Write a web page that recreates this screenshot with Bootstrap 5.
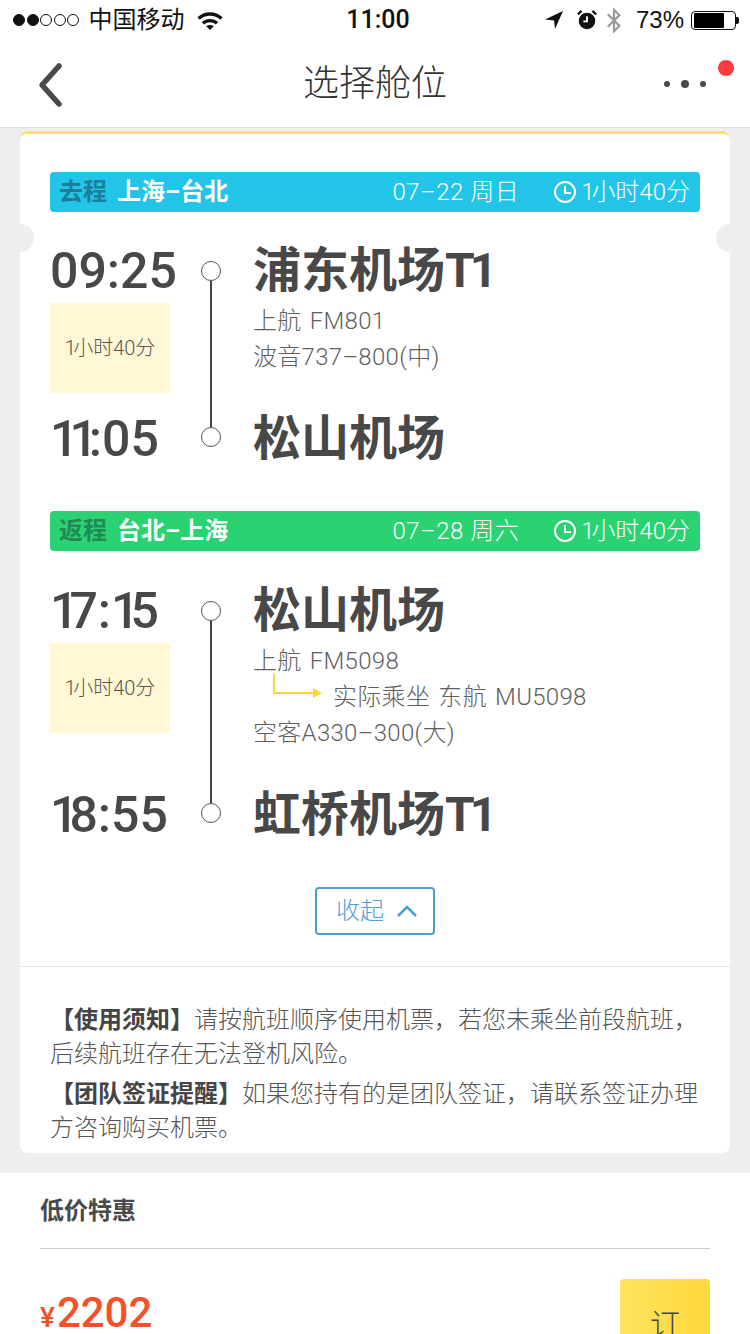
<!DOCTYPE html>
<html lang="zh-CN">
<head>
    <meta charset="UTF-8">
    <meta name="viewport" content="width=device-width, initial-scale=1.0">
    <title>选择舱位</title>
    <link href="https://cdn.jsdelivr.net/npm/bootstrap@5.3.0/dist/css/bootstrap.min.css" rel="stylesheet">
    <style>
        html, body {
            height: 1334px;
            overflow: hidden;
        }
        body {
            background-color: #eee;
            font-family: Roboto, "Noto Sans CJK SC", sans-serif;
            color: #4a4a4a;
        }
        /* digits in the picture are proportional, so the 1 sits tighter */
        .one-big {
            letter-spacing: -.18em;
        }
        .one-thin {
            letter-spacing: -.13em;
        }
        .status-bar {
            height: 40px;
            padding: 0 11px 0 13px;
            font-size: 24px;
            color: #111;
        }
        .signal-dot {
            width: 12px;
            height: 12px;
            margin-right: 1.5px;
            border-radius: 50%;
            border: 1px solid #111;
        }
        .signal-dot.on {
            background-color: #111;
        }
        .carrier {
            margin-left: 8px;
            margin-right: 12px;
            font-family: "Liberation Sans", "Noto Sans CJK SC", sans-serif;
        }
        .status-time {
            left: 0;
            right: 0;
            top: 4px;
            font-size: 25px;
            font-weight: 500;
            line-height: 32px;
            text-align: center;
            padding-left: 6px;
        }
        .alarm-icon {
            margin-left: 12px;
        }
        .battery-pct {
            margin-left: 14px;
            font-family: "Liberation Sans", sans-serif;
        }
        .battery-shell {
            width: 45px;
            height: 19px;
            margin-left: 7px;
            border: 1px solid #111;
            border-radius: 4px;
            padding: 1px 2px;
        }
        .battery-fill {
            width: 30px;
            height: 100%;
            background-color: #000;
            border-radius: 1px;
        }
        .battery-tip {
            width: 3px;
            height: 7px;
            background-color: #111;
            border-radius: 0 2px 2px 0;
        }
        .top-nav {
            height: 88px;
            border-bottom: 1px solid #ddd;
        }
        .nav-title {
            font-size: 36px;
            font-weight: 300;
            color: #333;
        }
        .nav-back {
            left: 36px;
            top: 22px;
        }
        .nav-more {
            left: 663px;
            top: 40px;
        }
        .nav-badge {
            left: 718px;
            top: 20px;
            width: 16px;
            height: 16px;
            border-radius: 50%;
            background-color: #ff3b41;
        }
        .ticket {
            margin: 3px 20px 20px;
            padding: 38px 30px 8px;
            border-top: 3px solid #fbe070;
            border-radius: 8px;
            overflow: hidden;
        }
        .notch {
            width: 28px;
            height: 28px;
            top: 90px;
            border-radius: 50%;
            background-color: #eee;
        }
        .notch.l {
            left: -14px;
        }
        .notch.r {
            right: -14px;
        }
        .leg-bar {
            height: 40px;
            padding: 0 10px 0 9px;
            border-radius: 4px;
            color: #fff;
            font-size: 24px;
        }
        .leg-bar.go {
            background-color: #22c5e8;
        }
        .leg-bar.back {
            background-color: #2bd272;
            margin-top: 44px;
        }
        .leg-tag {
            font-weight: 700;
            margin-right: 10px;
        }
        .go .leg-tag {
            color: #1b7f98;
        }
        .back .leg-tag {
            color: #1f8a55;
        }
        .leg-route {
            font-weight: 700;
        }
        .leg-date {
            font-weight: 300;
            margin-right: 34px;
            letter-spacing: .5px;
        }
        .leg-dur {
            font-weight: 300;
        }
        .leg-dur svg {
            margin-right: 4px;
        }
        .leg-body {
            margin-top: 29px;
        }
        .back + .leg-body {
            margin-top: 30px;
        }
        .time-col {
            width: 149px;
        }
        .dep-time {
            font-size: 50px;
            line-height: 60px;
            font-weight: 500;
            color: #484848;
        }
        .dep-time.arr {
            margin-bottom: -2px;
        }
        .dur-box {
            width: 120px;
            height: 90px;
            margin-top: 2px;
            background-color: #fff7d6;
            font-size: 20px;
            font-weight: 300;
            color: #555;
        }
        .line-col {
            width: 24px;
            padding: 20px 0;
        }
        .line-dot {
            width: 20px;
            height: 20px;
            flex: none;
            border-radius: 50%;
            border: 1.5px solid #555;
            background-color: #fff;
        }
        .line-bar {
            width: 2px;
            background-color: #444;
        }
        .info-col {
            margin-left: 30px;
        }
        .port-name {
            font-size: 48px;
            line-height: 60px;
            font-weight: 700;
            color: #484848;
        }
        .port-name.arr {
            margin-bottom: -2px;
        }
        .tee-kern {
            letter-spacing: -5px;
        }
        .port-info {
            margin-top: 2px;
            margin-bottom: 34px;
            font-size: 24px;
            line-height: 36px;
            font-weight: 300;
            color: #5f5f5f;
            word-spacing: 2px;
            letter-spacing: .3px;
        }
        .share-arrow {
            margin-left: 20px;
            margin-right: 10px;
            overflow: visible;
        }
        .fold-btn {
            width: 120px;
            height: 48px;
            margin-top: 44px;
            padding-left: 4px;
            border: 2px solid #4a9fd4;
            border-radius: 4px;
            color: #4a9fd4;
            font-size: 24px;
            font-weight: 300;
        }
        .fold-btn svg {
            margin-left: 12px;
        }
        .ticket-rule {
            margin: 31px -30px 36px;
            border-top: 1px solid #e4e4e4;
        }
        .notice {
            margin-bottom: 6px;
            font-size: 24px;
            line-height: 34px;
            font-weight: 300;
            color: #555;
        }
        .notice:last-child {
            margin-bottom: 0;
        }
        .notice b {
            font-weight: 700;
            color: #444;
        }
        .fare-panel {
            height: 300px;
            padding: 0 40px;
        }
        .fare-title {
            height: 76px;
            border-bottom: 1px solid #ccc;
            font-size: 24px;
            font-weight: 700;
            color: #4a4a4a;
        }
        .fare-row {
            margin-top: 30px;
        }
        .fare-price {
            margin-top: 10px;
            color: #f4502a;
            font-size: 42px;
            font-weight: 500;
            line-height: 48px;
        }
        .fare-yen {
            font-size: 28px;
            margin-right: 2px;
        }
        .fare-book {
            width: 90px;
            height: 90px;
            border-radius: 4px;
            background: linear-gradient(90deg, #ffe25f, #ffd93b);
            font-size: 30px;
            font-weight: 300;
            color: #444;
        }
    </style>
</head>
<body>

    <!-- Status bar -->
    <div class="status-bar bg-white d-flex align-items-center position-relative">
        <span class="signal-dot on"></span>
        <span class="signal-dot on"></span>
        <span class="signal-dot"></span>
        <span class="signal-dot"></span>
        <span class="signal-dot"></span>
        <span class="carrier">中国移动</span>
        <svg width="26" height="19" viewBox="0 0 24 18">
            <path d="M0 6C6.5 -0.5 17.5 -0.5 24 6L21.8 8.4C16.5 3.2 7.5 3.2 2.2 8.4Z" fill="#111"/>
            <path d="M4.2 10.4C8.6 6.6 15.4 6.6 19.8 10.4L17.6 12.8C14.3 10 9.7 10 6.4 12.8Z" fill="#111"/>
            <path d="M8.4 14.4C10.6 12.8 13.4 12.8 15.6 14.4L12 18Z" fill="#111"/>
        </svg>
        <div class="status-time position-absolute">11:00</div>
        <div class="ms-auto d-flex align-items-center position-relative">
            <svg width="20" height="20" viewBox="0 0 20 20"><path d="M19 1L1 9.5L10 10.5L11 19Z" fill="#111"/></svg>
            <svg class="alarm-icon" width="22" height="22" viewBox="0 0 24 24">
                <circle cx="12" cy="13" r="9" fill="#111"/>
                <path d="M12 8V13.5H8" fill="none" stroke="#fff" stroke-width="2"/>
                <path d="M2 6L6 2M22 6L18 2" stroke="#111" stroke-width="2.5"/>
            </svg>
            <svg class="ms-2" width="16" height="27" viewBox="0 0 18 30">
                <path d="M2 8L15 21L9 27V3L15 9L2 22" fill="none" stroke="#999" stroke-width="2.5"/>
            </svg>
            <span class="battery-pct">73%</span>
            <div class="battery-shell"><div class="battery-fill"></div></div>
            <div class="battery-tip"></div>
        </div>
    </div>

    <!-- Nav -->
    <div class="top-nav bg-white d-flex align-items-center justify-content-center position-relative">
        <svg class="nav-back position-absolute" width="30" height="46" viewBox="0 0 30 46">
            <path d="M23 4L6 23L23 42" fill="none" stroke="#4a4a4a" stroke-width="5.5" stroke-linecap="round" stroke-linejoin="round"/>
        </svg>
        <span class="nav-title">选择舱位</span>
        <svg class="nav-more position-absolute" width="46" height="12" viewBox="0 0 46 12">
            <circle cx="4" cy="4" r="3" fill="#4a4a4a"/>
            <circle cx="22" cy="4" r="4" fill="#4a4a4a"/>
            <circle cx="40" cy="4" r="3" fill="#4a4a4a"/>
        </svg>
        <span class="nav-badge position-absolute"></span>
    </div>

    <!-- Ticket card -->
    <div class="ticket bg-white position-relative">
        <span class="notch l position-absolute"></span>
        <span class="notch r position-absolute"></span>

        <div class="leg-bar go d-flex align-items-center">
            <span class="leg-tag">去程</span>
            <span class="leg-route">上海–台北</span>
            <span class="leg-date ms-auto">07–22 周日</span>
            <span class="leg-dur d-flex align-items-center">
                <svg width="24" height="24" viewBox="0 0 24 24"><circle cx="12" cy="12" r="10" fill="none" stroke="#fff" stroke-width="2"/><path d="M12 6V13H18" fill="none" stroke="#fff" stroke-width="2"/></svg>
                <span><span class="one-thin">1</span>小时40分</span>
            </span>
        </div>
        <div class="leg-body d-flex">
            <div class="time-col d-flex flex-column">
                <div class="dep-time">09:25</div>
                <div class="dur-box d-flex align-items-center justify-content-center"><span><span class="one-thin">1</span>小时40分</span></div>
                <div class="dep-time arr mt-auto"><span class="one-big">1</span><span class="one-big">1</span>:05</div>
            </div>
            <div class="line-col d-flex flex-column align-items-center">
                <span class="line-dot"></span>
                <span class="line-bar flex-grow-1"></span>
                <span class="line-dot"></span>
            </div>
            <div class="info-col">
                <div class="port-name">浦东机场<span class="tee-kern">T</span>1</div>
                <div class="port-info">
                    <div>上航 FM801</div>
                    <div>波音737–800(中)</div>
                </div>
                <div class="port-name arr">松山机场</div>
            </div>
        </div>

        <div class="leg-bar back d-flex align-items-center">
            <span class="leg-tag">返程</span>
            <span class="leg-route">台北–上海</span>
            <span class="leg-date ms-auto">07–28 周六</span>
            <span class="leg-dur d-flex align-items-center">
                <svg width="24" height="24" viewBox="0 0 24 24"><circle cx="12" cy="12" r="10" fill="none" stroke="#fff" stroke-width="2"/><path d="M12 6V13H18" fill="none" stroke="#fff" stroke-width="2"/></svg>
                <span><span class="one-thin">1</span>小时40分</span>
            </span>
        </div>
        <div class="leg-body d-flex">
            <div class="time-col d-flex flex-column">
                <div class="dep-time"><span class="one-big">1</span>7:<span class="one-big">1</span>5</div>
                <div class="dur-box d-flex align-items-center justify-content-center"><span><span class="one-thin">1</span>小时40分</span></div>
                <div class="dep-time arr mt-auto"><span class="one-big">1</span>8:55</div>
            </div>
            <div class="line-col d-flex flex-column align-items-center">
                <span class="line-dot"></span>
                <span class="line-bar flex-grow-1"></span>
                <span class="line-dot"></span>
            </div>
            <div class="info-col">
                <div class="port-name">松山机场</div>
                <div class="port-info">
                    <div>上航 FM5098</div>
                    <div class="d-flex align-items-center">
                        <svg class="share-arrow" width="50" height="36" viewBox="0 0 50 36">
                            <path d="M1 -5V14H41" fill="none" stroke="#fbd836" stroke-width="2"/>
                            <path d="M40 9L49 14L40 19Z" fill="#fbd836"/>
                        </svg>
                        <span>实际乘坐 东航 MU5098</span>
                    </div>
                    <div>空客A330–300(大)</div>
                </div>
                <div class="port-name arr">虹桥机场<span class="tee-kern">T</span>1</div>
            </div>
        </div>

        <div class="d-flex justify-content-center">
            <div class="fold-btn d-flex align-items-center justify-content-center">
                收起
                <svg width="22" height="14" viewBox="0 0 22 14"><path d="M2 12L11 3L20 12" fill="none" stroke="#4a9fd4" stroke-width="2.5"/></svg>
            </div>
        </div>

        <div class="ticket-rule"></div>
        <p class="notice"><b>【使用须知】</b>请按航班顺序使用机票，若您未乘坐前段航班，后续航班存在无法登机风险。</p>
        <p class="notice"><b>【团队签证提醒】</b>如果您持有的是团队签证，请联系签证办理方咨询购买机票。</p>
    </div>

    <!-- Fare -->
    <div class="fare-panel bg-white">
        <div class="fare-title d-flex align-items-center">低价特惠</div>
        <div class="fare-row d-flex justify-content-between align-items-start">
            <div class="fare-price"><span class="fare-yen">¥</span>2202</div>
            <div class="fare-book d-flex align-items-center justify-content-center">订</div>
        </div>
    </div>

    <script src="https://cdn.jsdelivr.net/npm/bootstrap@5.3.0/dist/js/bootstrap.bundle.min.js"></script>
</body>
</html>
